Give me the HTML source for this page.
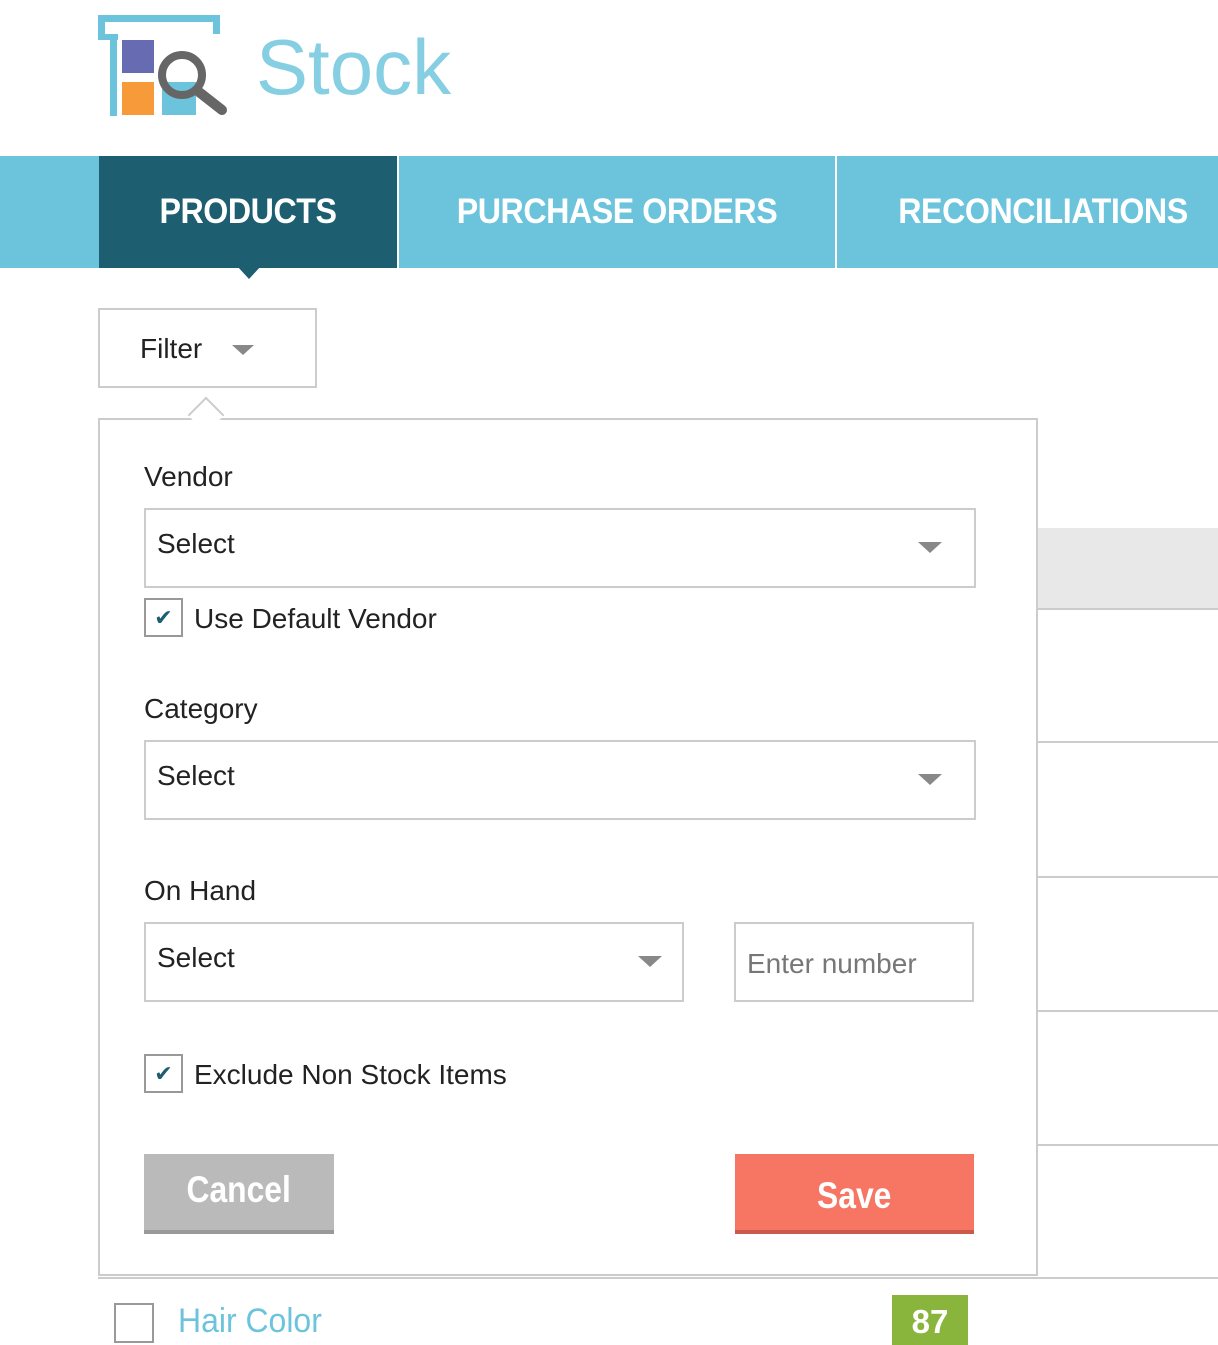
<!DOCTYPE html>
<html><head><style>
*{margin:0;padding:0;box-sizing:border-box}
body{width:1218px;height:1334px;position:relative;overflow:hidden;background:#fff;font-family:"Liberation Sans",sans-serif;color:#222}
.a{position:absolute}
.nav{left:0;top:156px;width:1218px;height:112px;background:#6cc4dc}
.tab{top:156px;height:112px;color:#fff;font-size:35px;font-weight:bold;display:flex;align-items:center;justify-content:center;letter-spacing:-0.5px;transform:scaleX(0.92)}
.box{border:2px solid #ccc;background:#fff}
.sel{font-size:27px;color:#222;padding-left:11px;display:flex;align-items:center}
.tri{width:0;height:0;border-left:12px solid transparent;border-right:12px solid transparent;border-top:11px solid #888}
.lbl{font-size:27px;color:#222}
.cb{width:39px;height:39px;border:2px solid #999;color:#1d5e70;font-size:22px;display:flex;align-items:center;justify-content:center}
.hl{height:2px;background:#ccc}
</style></head><body>
<!-- logo -->
<svg class="a" style="left:0;top:0" width="240" height="125" viewBox="0 0 240 125">
<path d="M98 15 H220 V22 H98 Z M213 15 H220 V34 H213 Z M98 15 H105 V40 H98 Z M98 34 H118 V40 H98 Z M110 34 H117 V116 H110 Z" fill="#6cc4dc"/>
<rect x="122" y="40" width="32" height="33" fill="#666bb2"/>
<rect x="122" y="82" width="32" height="33" fill="#f79b3a"/>
<rect x="162" y="82" width="34" height="33" fill="#6cc4dc"/>
<circle cx="182" cy="75" r="20" fill="none" stroke="#666" stroke-width="8"/>
<path d="M199 92 L222 110" stroke="#666" stroke-width="10" stroke-linecap="round"/>
</svg>
<div class="a" style="left:256px;top:22px;font-size:78px;color:#86cfe3;letter-spacing:0px;transform:scaleX(1);transform-origin:left">Stock</div>
<!-- nav -->
<div class="a nav"></div>
<div class="a" style="left:99px;top:156px;width:298px;height:112px;background:#1d5e70"></div>
<div class="a" style="left:397px;top:156px;width:2px;height:112px;background:#fff"></div>
<div class="a" style="left:835px;top:156px;width:2px;height:112px;background:#fff"></div>
<div class="a" style="left:237px;top:266px;width:0;height:0;border-left:12px solid transparent;border-right:12px solid transparent;border-top:13px solid #1d5e70"></div>
<div class="a tab" style="left:99px;width:298px">PRODUCTS</div>
<div class="a tab" style="left:399px;width:436px">PURCHASE ORDERS</div>
<div class="a tab" style="left:837px;width:412px">RECONCILIATIONS</div>
<!-- right side background -->
<div class="a" style="left:1038px;top:528px;width:180px;height:80px;background:#e8e8e8"></div>
<div class="a hl" style="left:1038px;top:608px;width:180px"></div>
<div class="a hl" style="left:1038px;top:741px;width:180px"></div>
<div class="a hl" style="left:1038px;top:876px;width:180px"></div>
<div class="a hl" style="left:1038px;top:1010px;width:180px"></div>
<div class="a hl" style="left:1038px;top:1144px;width:180px"></div>
<div class="a hl" style="left:98px;top:1277px;width:1120px"></div>
<!-- filter button -->
<div class="a box" style="left:98px;top:308px;width:219px;height:80px"></div>
<div class="a" style="left:140px;top:333px;font-size:28px">Filter</div>
<div class="a tri" style="left:232px;top:345px;border-left-width:11px;border-right-width:11px;border-top-width:10px"></div>
<!-- panel -->
<div class="a box" style="left:98px;top:418px;width:940px;height:858px"></div>
<div class="a" style="left:193px;top:402px;width:26px;height:26px;background:#fff;border-left:2px solid #ccc;border-top:2px solid #ccc;transform:rotate(45deg)"></div>
<div class="a lbl" style="left:144px;top:461px;font-size:28px">Vendor</div>
<div class="a box sel" style="left:144px;top:508px;width:832px;height:80px;padding-bottom:8px;font-size:28px">Select</div>
<div class="a tri" style="left:918px;top:542px"></div>
<div class="a cb" style="left:144px;top:598px">✔</div>
<div class="a lbl" style="left:194px;top:603px;font-size:28px">Use Default Vendor</div>
<div class="a lbl" style="left:144px;top:693px;font-size:28px">Category</div>
<div class="a box sel" style="left:144px;top:740px;width:832px;height:80px;padding-bottom:8px;font-size:28px">Select</div>
<div class="a tri" style="left:918px;top:774px"></div>
<div class="a lbl" style="left:144px;top:875px;font-size:28px">On Hand</div>
<div class="a box sel" style="left:144px;top:922px;width:540px;height:80px;padding-bottom:8px;font-size:28px">Select</div>
<div class="a tri" style="left:638px;top:956px"></div>
<div class="a box sel" style="left:734px;top:922px;width:240px;height:80px;color:#777;padding-top:4px;font-size:28px">Enter number</div>
<div class="a cb" style="left:144px;top:1054px">✔</div>
<div class="a lbl" style="left:194px;top:1059px;font-size:28px">Exclude Non Stock Items</div>
<div class="a" style="left:144px;top:1154px;width:190px;height:80px;background:#bababa;border-bottom:4px solid #999;color:#fff;font-size:37px;font-weight:bold;display:flex;align-items:center;justify-content:center;padding-bottom:4px"><span style="transform:scaleX(.86);display:inline-block">Cancel</span></div>
<div class="a" style="left:735px;top:1154px;width:239px;height:80px;background:#f77563;border-bottom:4px solid #cc5a4b;color:#fff;font-size:37px;font-weight:bold;display:flex;align-items:center;justify-content:center;padding-top:8px"><span style="transform:scaleX(.86);display:inline-block">Save</span></div>
<!-- bottom row -->
<div class="a" style="left:114px;top:1303px;width:40px;height:40px;border:2px solid #999"></div>
<div class="a" style="left:178px;top:1302px;font-size:34px;color:#6cc4dc;transform:scaleX(.94);transform-origin:left">Hair Color</div>
<div class="a" style="left:892px;top:1295px;width:76px;height:50px;background:#89b53d;color:#fff;font-size:33px;font-weight:bold;text-align:center;padding-top:8px">87</div>
</body></html>
